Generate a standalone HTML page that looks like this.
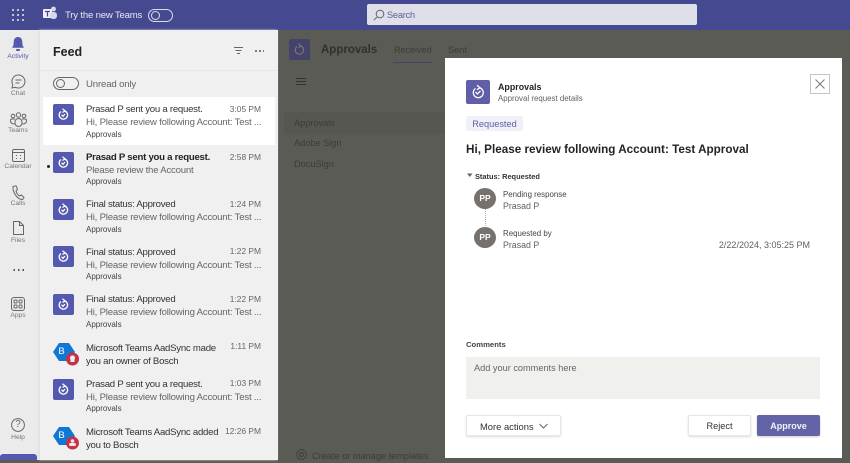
<!DOCTYPE html>
<html><head><meta charset="utf-8"><style>
*{box-sizing:border-box}
html,body{margin:0;padding:0}
body{width:850px;height:460px;overflow:hidden;position:relative;background:#5b5b55;font-family:"Liberation Sans",sans-serif;color:#252423}
.a{position:absolute;white-space:nowrap}
.t{font-size:9.600px;line-height:14px;color:#333;left:86px;letter-spacing:-.25px;margin-top:1px}
.s{font-size:9.600px;line-height:14px;color:#666;left:86px;letter-spacing:-.2px;margin-top:1px}
.l{font-size:8px;line-height:12px;color:#444;left:86px;margin-top:1px}
.h{font-size:8.400px;line-height:14px;color:#666;right:589px}
.r{font-size:6.700px;line-height:10px;color:#777;width:36px;text-align:center;left:0}
.ic{position:absolute;left:53px;width:21px;height:21px;background:#5558af;border-radius:2px}
.dim{font-size:9.200px;color:#3c3c38}
</style></head><body>
<div class="a" style="left:0;top:0;width:850px;height:30px;background:#454a90"></div>
<svg class="a" style="left:11px;top:8px" width="14" height="14" fill="#e8e8f2"><circle cx="2" cy="2" r="1"/><circle cx="7" cy="2" r="1"/><circle cx="12" cy="2" r="1"/><circle cx="2" cy="7" r="1"/><circle cx="7" cy="7" r="1"/><circle cx="12" cy="7" r="1"/><circle cx="2" cy="12" r="1"/><circle cx="7" cy="12" r="1"/><circle cx="12" cy="12" r="1"/></svg>
<svg class="a" style="left:43px;top:6px" width="14" height="15"><rect x="0" y="3" width="9" height="9" rx="1" fill="#f0f0f8"/><circle cx="10.500" cy="3" r="2.400" fill="#d8d8ec"/><rect x="7" y="6" width="7" height="7" rx="3" fill="#d8d8ec"/><path d="M2 5.500h5M4.500 5.500v5" stroke="#454a90" stroke-width="1.300"/></svg>
<div class="a" style="left:65px;top:9px;font-size:9.600px;line-height:14px;letter-spacing:-.2px;color:#e6e6f2">Try the new Teams</div>
<div class="a" style="left:148px;top:9px;width:25px;height:13px;border:1px solid #dcdcec;border-radius:7px"><div class="a" style="left:2px;top:1px;width:9px;height:9px;border:1px solid #dcdcec;border-radius:50%"></div></div>
<div class="a" style="left:367px;top:4px;width:330px;height:21px;background:#dfdfea;border-radius:2px"></div>
<svg class="a" style="left:373px;top:9px" width="12" height="12" fill="none" stroke="#666"><circle cx="7" cy="5" r="3.800"/><path d="M4.300 7.800L.8 11.200"/></svg>
<div class="a" style="left:387px;top:8px;font-size:9.200px;line-height:14px;letter-spacing:-.2px;color:#5c5f98">Search</div>

<div class="a" style="left:0;top:30px;width:40px;height:430px;background:#ebebeb"></div>
<svg class="a" style="left:12px;top:37px" width="12" height="15" fill="#5558af"><path d="M6 0C2.800 0 1.700 2.500 1.700 5.500 1.700 8 1 9.500 0 10.800h12c-1-1.300-1.700-2.800-1.700-5.300C10.300 2.500 9.200 0 6 0z"/><rect x="4" y="12" width="4" height="2" rx="1"/></svg>
<div class="a r" style="top:52px;color:#5558af">Activity</div>
<svg class="a" style="left:11px;top:74px" width="15" height="15" fill="none" stroke="#666"><path d="M7.500 1a6.500 6.500 0 1 1-3 12.300L1 14l.8-3.300A6.500 6.500 0 0 1 7.500 1z"/><path d="M4.500 6h6M4.500 9h4"/></svg>
<div class="a r" style="top:89px">Chat</div>
<svg class="a" style="left:10px;top:112px" width="17" height="15" fill="none" stroke="#666"><circle cx="8.500" cy="3" r="2.200"/><circle cx="3" cy="4" r="1.800"/><circle cx="14" cy="4" r="1.800"/><rect x="5" y="6.500" width="7" height="8" rx="3.500"/><path d="M5 7H2Q.5 7 .5 8.500 .5 12 4.500 12M12 7h3q1.500 0 1.500 1.500 0 3.500-4 3.500"/></svg>
<div class="a r" style="top:126px">Teams</div>
<svg class="a" style="left:12px;top:149px" width="13" height="13" fill="none" stroke="#666"><rect x=".5" y=".5" width="12" height="12" rx="1.500"/><path d="M.5 3.500h12M4 6.500h1M8 6.500h1M4 9.500h1M8 9.500h1"/></svg>
<div class="a r" style="top:162px">Calendar</div>
<svg class="a" style="left:12px;top:185px" width="13" height="15" fill="none" stroke="#666"><path d="M1 1.500L4 .8l1.500 3.500L4 6c.5 2 2 4 3.500 5l2-1 2.500 2.500-1.500 2C5 14.500 .5 7 1 1.500z"/></svg>
<div class="a r" style="top:199px">Calls</div>
<svg class="a" style="left:13px;top:221px" width="11" height="14" fill="none" stroke="#666"><path d="M.5.500h6l4 4v9H.5z M6.500.5v4h4"/></svg>
<div class="a r" style="top:236px">Files</div>
<div class="a" style="left:12px;top:269px;width:12px;height:2px;background-image:radial-gradient(circle,#555 1px,transparent 1px);background-size:4.500px 2px"></div>
<svg class="a" style="left:11px;top:297px" width="14" height="14" fill="none" stroke="#666"><rect x=".5" y=".5" width="13" height="13" rx="2.500"/><rect x="3" y="3" width="3" height="3" rx=".6"/><rect x="8" y="3" width="3" height="3" rx=".6"/><rect x="3" y="8" width="3" height="3" rx=".6"/><rect x="8" y="8" width="3" height="3" rx=".6"/></svg>
<div class="a r" style="top:311px">Apps</div>
<svg class="a" style="left:11px;top:418px" width="14" height="14" fill="none" stroke="#666"><circle cx="7" cy="7" r="6.400"/></svg>
<div class="a" style="left:11px;top:418px;width:14px;text-align:center;font-size:10px;line-height:14px;color:#666">?</div>
<div class="a r" style="top:433px">Help</div>
<div class="a" style="left:0;top:454px;width:37px;height:6px;background:#5558af;border-radius:3px 3px 0 0"></div>

<div class="a" style="left:40px;top:30px;width:238px;height:430px;background:#f0f0f0;box-shadow:-1px 0 2px #ddd"></div>
<div class="a" style="left:40px;top:70px;width:238px;height:1px;background:#e6e6e6"></div>
<div class="a" style="left:53px;top:43px;font-size:12.500px;line-height:18px;font-weight:700;color:#222">Feed</div>
<svg class="a" style="left:233px;top:46px" width="11" height="9" stroke="#666"><path d="M1 1.500h9M2.500 4.500h6M4 7.500h3"/></svg>
<div class="a" style="left:254px;top:50px;width:10px;height:2px;background-image:radial-gradient(circle,#555 1px,transparent 1px);background-size:4px 2px"></div>
<div class="a" style="left:53px;top:77px;width:26px;height:13px;border:1px solid #666;border-radius:7px"><div class="a" style="left:2px;top:1px;width:9px;height:9px;border:1px solid #666;border-radius:50%"></div></div>
<div class="a" style="left:86px;top:78px;font-size:9.600px;line-height:14px;letter-spacing:-.15px;color:#666">Unread only</div>
<div class="a" style="left:43px;top:97px;width:232px;height:48px;background:#fff"></div>

<div class="ic" style="top:104px"></div><div class="a t" style="top:102px">Prasad P sent you a request.</div><div class="a h" style="top:102px">3:05 PM</div><div class="a s" style="top:115px">Hi, Please review following Account: Test ...</div><div class="a l" style="top:128px">Approvals</div>
<div class="ic" style="top:152px"></div><div class="a" style="left:47px;top:165px;width:3px;height:3px;background:#222;border-radius:50%"></div><div class="a t" style="top:150px;font-weight:700;color:#222">Prasad P sent you a request.</div><div class="a h" style="top:150px">2:58 PM</div><div class="a s" style="top:163px">Please review the Account</div><div class="a l" style="top:175px">Approvals</div>
<div class="ic" style="top:199px"></div><div class="a t" style="top:197px">Final status: Approved</div><div class="a h" style="top:197px">1:24 PM</div><div class="a s" style="top:210px">Hi, Please review following Account: Test ...</div><div class="a l" style="top:223px">Approvals</div>
<div class="ic" style="top:246px"></div><div class="a t" style="top:245px">Final status: Approved</div><div class="a h" style="top:244px">1:22 PM</div><div class="a s" style="top:258px">Hi, Please review following Account: Test ...</div><div class="a l" style="top:270px">Approvals</div>
<div class="ic" style="top:294px"></div><div class="a t" style="top:292px">Final status: Approved</div><div class="a h" style="top:292px">1:22 PM</div><div class="a s" style="top:305px">Hi, Please review following Account: Test ...</div><div class="a l" style="top:318px">Approvals</div>
<div class="a t" style="top:341px">Microsoft Teams AadSync made</div><div class="a t" style="top:354px">you an owner of Bosch</div><div class="a h" style="top:339px">1:11 PM</div>
<div class="ic" style="top:379px"></div><div class="a t" style="top:377px">Prasad P sent you a request.</div><div class="a h" style="top:376px">1:03 PM</div><div class="a s" style="top:390px">Hi, Please review following Account: Test ...</div><div class="a l" style="top:402px">Approvals</div>
<div class="a t" style="top:425px">Microsoft Teams AadSync added</div><div class="a t" style="top:438px">you to Bosch</div><div class="a h" style="top:424px">12:26 PM</div>

<svg class="a" style="left:53px;top:104px" width="21" height="300" fill="none" stroke="#fff" stroke-width="1.300"><path d="M8 7.500a4.200 4.200 0 1 0 3-.7M9.500 4.800L12 6.800 9.500 8.500M8.500 10.800l1.500 1.500 2-2.300"/><path transform="translate(0,48)" d="M8 7.500a4.200 4.200 0 1 0 3-.7M9.500 4.800L12 6.800 9.500 8.500M8.500 10.800l1.500 1.500 2-2.300"/><path transform="translate(0,95)" d="M8 7.500a4.200 4.200 0 1 0 3-.7M9.500 4.800L12 6.800 9.500 8.500M8.500 10.800l1.500 1.500 2-2.300"/><path transform="translate(0,142)" d="M8 7.500a4.200 4.200 0 1 0 3-.7M9.500 4.800L12 6.800 9.500 8.500M8.500 10.800l1.500 1.500 2-2.300"/><path transform="translate(0,190)" d="M8 7.500a4.200 4.200 0 1 0 3-.7M9.500 4.800L12 6.800 9.500 8.500M8.500 10.800l1.500 1.500 2-2.300"/><path transform="translate(0,275)" d="M8 7.500a4.200 4.200 0 1 0 3-.7M9.500 4.800L12 6.800 9.500 8.500M8.500 10.800l1.500 1.500 2-2.300"/></svg>

<svg class="a" style="left:53px;top:342px" width="27" height="26"><path d="M6 1h10l6 9-6 9H6L0 10z" fill="#0f78d4"/><circle cx="19.500" cy="17" r="6.500" fill="#c4314b"/><circle cx="19.500" cy="16" r="2.600" fill="#f5e6e8"/><rect x="17.500" y="18" width="4" height="2" fill="#f5e6e8"/></svg>
<div class="a" style="left:56px;top:345px;width:11px;text-align:center;font-size:9.500px;line-height:14px;color:#fff">B</div>
<svg class="a" style="left:53px;top:426px" width="27" height="26"><path d="M6 1h10l6 9-6 9H6L0 10z" fill="#0f78d4"/><circle cx="19.500" cy="17" r="6.500" fill="#c4314b"/><circle cx="19.500" cy="15" r="1.800" fill="#f5e6e8"/><rect x="16" y="17" width="7" height="3" rx="1.500" fill="#f5e6e8"/></svg>
<div class="a" style="left:56px;top:429px;width:11px;text-align:center;font-size:9.500px;line-height:14px;color:#fff">B</div>

<div class="a" style="left:289px;top:39px;width:21px;height:21px;background:#44446a;border-radius:2px"></div>
<svg class="a" style="left:289px;top:39px" width="21" height="21" fill="none" stroke="#777" stroke-width="1.100"><path d="M8 7.500a4.200 4.200 0 1 0 3-.7M9.500 4.800L12 6.800 9.500 8.500"/></svg>
<div class="a" style="left:321px;top:42px;font-size:11.500px;line-height:17px;font-weight:700;color:#30302d">Approvals</div>
<div class="a dim" style="left:394px;top:43px;line-height:14px;letter-spacing:-.1px">Received</div>
<div class="a dim" style="left:448px;top:43px;line-height:14px">Sent</div>
<div class="a" style="left:393px;top:62px;width:39px;height:1px;background:#44446a"></div>
<svg class="a" style="left:296px;top:78px" width="10" height="8" stroke="#33332f"><path d="M0 .5h10M0 3.500h10M0 6.500h10"/></svg>
<div class="a" style="left:284px;top:112px;width:161px;height:22px;background:#575751"></div>
<div class="a dim" style="left:294px;top:116px;line-height:14px">Approvals</div>
<div class="a dim" style="left:294px;top:136px;line-height:14px">Adobe Sign</div>
<div class="a dim" style="left:294px;top:157px;line-height:14px">DocuSign</div>
<svg class="a" style="left:296px;top:449px" width="11" height="11" fill="none" stroke="#3c3c38"><circle cx="5.500" cy="5.500" r="4.800" stroke-dasharray="2 .6"/><circle cx="5.500" cy="5.500" r="2"/></svg>
<div class="a dim" style="left:312px;top:449px;line-height:14px">Create or manage templates</div>

<div class="a" style="left:445px;top:58px;width:397px;height:400px;background:#fff"></div>
<div class="a" style="left:466px;top:80px;width:24px;height:24px;background:#5f5ea7;border-radius:2px"></div>
<svg class="a" style="left:466px;top:80px" width="24" height="24" fill="none" stroke="#fff" stroke-width="1.300"><path d="M9.500 8.500a5 5 0 1 0 3.500-.8M11 5.300L14 7.700 11 9.700M9.500 12l2 2 3-3.200"/></svg>
<div class="a" style="left:498px;top:80px;font-size:8.900px;line-height:14px;font-weight:700;color:#252423">Approvals</div>
<div class="a" style="left:498px;top:92px;font-size:7.900px;line-height:13px;color:#616161">Approval request details</div>
<div class="a" style="left:810px;top:74px;width:20px;height:20px;border:1px solid #c4c4c4"></div>
<svg class="a" style="left:815px;top:79px" width="10" height="10" stroke="#777"><path d="M.5.500l9 9M9.500.5l-9 9"/></svg>
<div class="a" style="left:466px;top:116px;width:57px;height:15px;background:#f0f0f9;border-radius:2px;font-size:9.200px;line-height:16px;color:#5f609e;text-align:center">Requested</div>
<div class="a" style="left:466px;top:141px;font-size:11.700px;line-height:18px;font-weight:700;color:#252423">Hi, Please review following Account: Test Approval</div>
<svg class="a" style="left:467px;top:173px" width="6" height="5" fill="#666"><path d="M0 .5h5.500L2.800 4z"/></svg>
<div class="a" style="left:475px;top:170px;font-size:7.400px;line-height:13px;font-weight:700;color:#333">Status: Requested</div>
<div class="a" style="left:485px;top:208px;width:1px;height:20px;border-left:1px dotted #aaa"></div>
<div class="a" style="left:474px;top:188px;width:22px;height:21px;border-radius:50%;background:#77716d;color:#fff;font-size:8.500px;font-weight:700;line-height:21px;text-align:center">PP</div>
<div class="a" style="left:474px;top:227px;width:22px;height:21px;border-radius:50%;background:#77716d;color:#fff;font-size:8.500px;font-weight:700;line-height:21px;text-align:center">PP</div>
<div class="a" style="left:503px;top:188px;font-size:7.900px;line-height:13px;color:#444">Pending response</div>
<div class="a" style="left:503px;top:199px;font-size:8.800px;line-height:14px;color:#616161">Prasad P</div>
<div class="a" style="left:503px;top:227px;font-size:7.900px;line-height:13px;color:#444">Requested by</div>
<div class="a" style="left:503px;top:238px;font-size:8.800px;line-height:14px;color:#616161">Prasad P</div>
<div class="a" style="right:40px;top:238px;font-size:9px;line-height:14px;color:#616161">2/22/2024, 3:05:25 PM</div>
<div class="a" style="left:466px;top:338px;font-size:7.700px;line-height:13px;font-weight:700;color:#444">Comments</div>
<div class="a" style="left:466px;top:357px;width:354px;height:42px;background:#f0f0ec"></div>
<div class="a" style="left:474px;top:361px;font-size:9.200px;line-height:14px;color:#666">Add your comments here</div>
<div class="a" style="left:466px;top:415px;width:95px;height:21px;background:#fff;border:1px solid #e6e6e6;box-shadow:0 1px 2px #ddd;border-radius:2px"></div>
<div class="a" style="left:480px;top:419px;font-size:9.400px;line-height:15px;color:#333">More actions</div>
<svg class="a" style="left:539px;top:423px" width="9" height="6" fill="none" stroke="#666"><path d="M.5 1l4 4 4-4"/></svg>
<div class="a" style="left:688px;top:415px;width:63px;height:21px;background:#fff;border:1px solid #e6e6e6;box-shadow:0 1px 2px #ddd;border-radius:2px;font-size:9.200px;line-height:20px;color:#333;text-align:center">Reject</div>
<div class="a" style="left:757px;top:415px;width:63px;height:21px;background:#6264a7;border-radius:2px;box-shadow:0 1px 2px #ccc;font-size:9px;line-height:22px;font-weight:700;color:#f2f2f8;text-align:center">Approve</div>
</body></html>
